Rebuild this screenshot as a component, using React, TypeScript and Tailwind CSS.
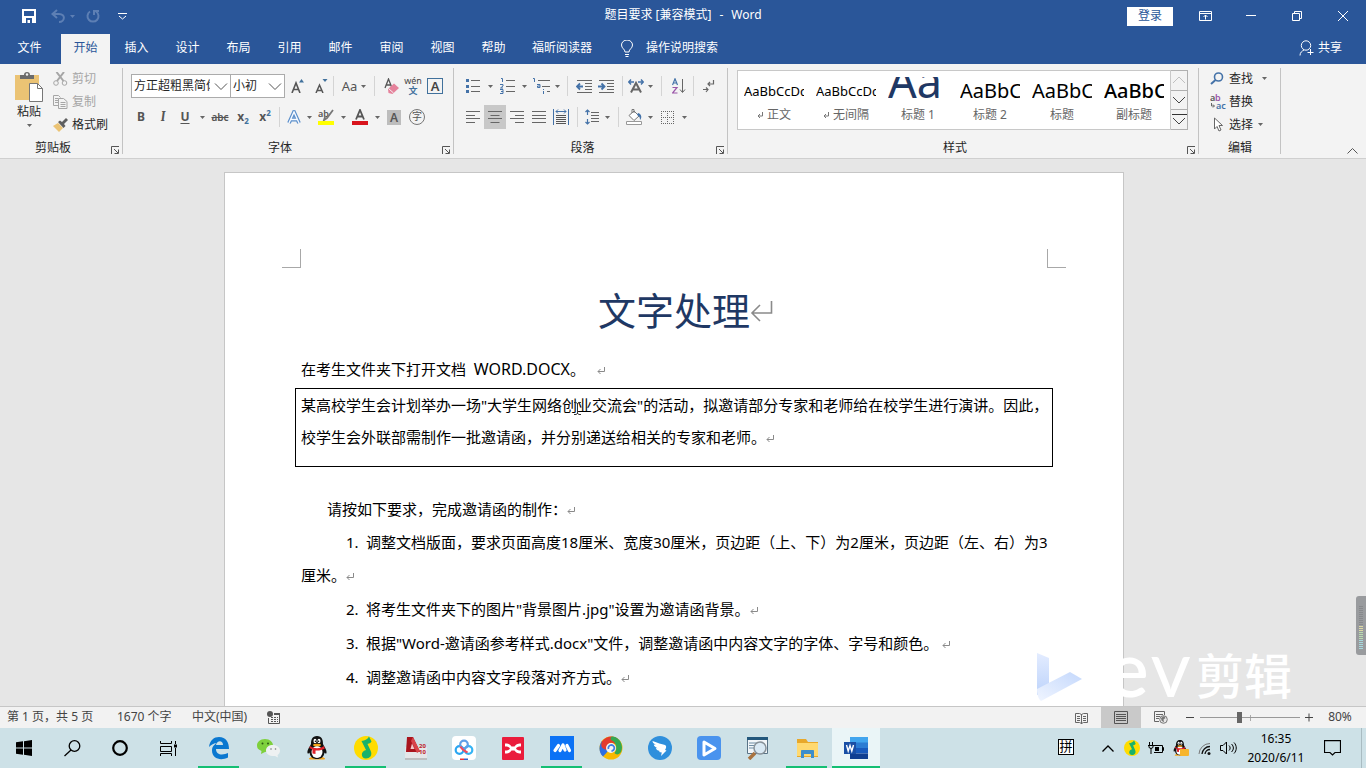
import React from "react";

type Kids = { children: React.ReactNode };

function Icon({ w, h, children }: Kids & { w: number; h: number }) {
  return (
    <svg width={w} height={h} viewBox={`0 0 ${w} ${h}`} fill="none" className="shrink-0" aria-hidden="true">
      {children}
    </svg>
  );
}

const Caret = () => (
  <Icon w={5} h={3}>
    <path d="M0 0h5L2.5 3z" fill="#666" />
  </Icon>
);

const Launcher = () => (
  <Icon w={8} h={8}>
    <path d="M.5 8V.5H8M3 3l4 4M7.500 3.500v4h-4" stroke="#555" />
  </Icon>
);

const Return = () => (
  <svg width="9" height="8" viewBox="0 0 9 8" fill="none" className="inline-block align-baseline" aria-hidden="true">
    <path d="M7.500 0v4.500H1M3.500 2L1 4.500 3.500 7" stroke="#8a8a8a" />
  </svg>
);

function Tool({ label, className, children }: Kids & { label: string; className: string }) {
  return (
    <button type="button" aria-label={label} className={`flex h-6 shrink-0 items-center justify-center ${className}`}>
      {children}
    </button>
  );
}

const Drop = ({ label, width = "w-3" }: { label: string; width?: string }) => (
  <Tool label={`${label} 选项`} className={width}>
    <Caret />
  </Tool>
);

const Sep = () => <span className="mx-[5px] h-5 w-px shrink-0 bg-[#d4d4d4]" />;

function Group({ title, className, launcher = true, children }: Kids & { title: string; className: string; launcher?: boolean }) {
  return (
    <section className={`relative flex shrink-0 flex-col ${className}`}>
      <div className="h-[72px]">{children}</div>
      <div className="flex h-[22px] items-center justify-center pt-[2px]">{title}</div>
      {launcher && (
        <button type="button" aria-label={`${title} 设置`} className="absolute right-[4px] bottom-[4px]">
          <Launcher />
        </button>
      )}
      <span className="absolute top-1 right-0 bottom-1 w-px bg-[#c3c3c3]" />
    </section>
  );
}

const tabs = ["插入", "设计", "布局", "引用", "邮件", "审阅", "视图", "帮助"];

function Header() {
  return (
    <header className="bg-[#2a5699] text-white">
      <div className="grid h-8 grid-cols-[1fr_auto_1fr] items-center">
        <div className="flex items-center pl-[22px]">
          <button type="button" aria-label="保存">
            <Icon w={14} h={14}>
              <path d="M0 0h14v14H0zM2 2v5h10V2zM4 9v5h1.500v-3H8v3h2V9z" fill="#fff" fillRule="evenodd" />
            </Icon>
          </button>
          <button type="button" aria-label="撤消" className="ml-[15px] flex items-center gap-[5px]">
            <Icon w={14} h={14}>
              <path d="M6 1L1.500 5 6 9M2 5h6c7 0 6 8 0 8" stroke="#5d7fb4" strokeWidth="2" />
            </Icon>
            <Icon w={5} h={3}>
              <path d="M0 0h5L2.500 3z" fill="#5d7fb4" />
            </Icon>
          </button>
          <button type="button" aria-label="恢复" className="ml-[11px]">
            <Icon w={14} h={14}>
              <path d="M4 2.500a5.500 5.500 0 1 0 6 0M8 6V2h5" stroke="#5d7fb4" strokeWidth="2" />
            </Icon>
          </button>
          <button type="button" aria-label="自定义快速访问工具栏" className="ml-[18px]">
            <Icon w={9} h={7}>
              <path d="M0 .5h9M1 3l3.500 3L8 3" stroke="#fff" />
            </Icon>
          </button>
        </div>
        <h1 className="flex gap-2 pb-[2px]">
          <span>题目要求 [兼容模式]</span>
          <span>-</span>
          <span>Word</span>
        </h1>
        <div className="flex items-center justify-end">
          <button type="button" className="mr-[9px] h-[19px] w-[46px] bg-white leading-[18px] text-[#2a5699]">
            登录
          </button>
          <button type="button" aria-label="功能区显示选项" className="flex w-[46px] justify-center">
            <Icon w={13} h={10}>
              <path d="M.5.500h12v9H.5zM.5 2.500h12M6.500 8.500V4M4.500 6l2-2 2 2" stroke="#fff" />
            </Icon>
          </button>
          <button type="button" aria-label="最小化" className="flex w-[46px] justify-center">
            <Icon w={10} h={10}>
              <path d="M0 4.500h10" stroke="#fff" />
            </Icon>
          </button>
          <button type="button" aria-label="还原" className="flex w-[46px] justify-center">
            <Icon w={10} h={10}>
              <path d="M.5 2.500h7v7h-7zM2.500 2.500v-2h7v7h-2" stroke="#fff" />
            </Icon>
          </button>
          <button type="button" aria-label="关闭" className="flex w-[46px] justify-center">
            <Icon w={10} h={10}>
              <path d="M0 0l10 10M10 0L0 10" stroke="#fff" />
            </Icon>
          </button>
        </div>
      </div>
      <nav className="flex h-8 items-end gap-[2px]">
        <button type="button" className="h-[30px] w-[59px] pb-[2px]">文件</button>
        <button type="button" className="h-[30px] w-[49px] bg-[#f3f3f3] pb-[2px] text-[#2a5699]">开始</button>
        {tabs.map((t) => (
          <button key={t} type="button" className="h-[30px] w-[49px] pb-[2px]">
            {t}
          </button>
        ))}
        <button type="button" className="h-[30px] w-[84px] pb-[2px]">福昕阅读器</button>
        <button type="button" className="ml-[15px] flex h-[30px] items-center gap-[13px] pb-[2px]">
          <Icon w={12} h={17}>
            <path d="M4 12c0-3-3.500-3.500-3.500-7a5.500 5 0 0 1 11 0c0 3.500-3.500 4-3.500 7zM4 14.500h4M4.500 16.500h3" stroke="#fff" />
          </Icon>
          操作说明搜索
        </button>
        <button type="button" className="mr-6 ml-auto flex h-[30px] items-center gap-1 pb-[2px]">
          <Icon w={15} h={16}>
            <circle cx="7" cy="5.500" r="4.700" stroke="#fff" />
            <path d="M1 15.500c0-3 2-4.500 4-5.500M11.500 9v6M8.500 12.500h6" stroke="#fff" />
          </Icon>
          共享
        </button>
      </nav>
    </header>
  );
}

function Clipboard() {
  return (
    <Group title="剪贴板" className="w-[123px] [&>div:nth-child(2)]:pr-[17px]">
      <div className="flex pt-[3px] pl-[14px]">
        <button type="button" className="flex w-[30px] flex-col items-center pt-[4px]">
          <Icon w={28} h={31}>
            <path d="M0 4h24v25H0z" fill="#ebc374" />
            <path d="M5 8V4h4a3 3 0 0 1 6 0h4v4z" fill="#6b6b6b" />
            <circle cx="12" cy="3.500" r="1.200" fill="#f3f3f3" />
            <path d="M14.500 12.500h8l5 5v13h-13z" fill="#fff" stroke="#777" />
            <path d="M22.500 12.500v5h5" stroke="#777" />
          </Icon>
          <span className="mt-[2px] leading-4">粘贴</span>
          <span className="mt-[4px]">
            <Caret />
          </span>
        </button>
        <div className="ml-[9px] flex flex-col">
          <button type="button" disabled className="flex h-[23px] items-center gap-1 text-[#a6a6a6]">
            <Icon w={15} h={14}>
              <path d="M3.500 0l7 9M11 0L4 9" stroke="#a6a6a6" strokeWidth="2" />
              <circle cx="3" cy="11" r="2.300" stroke="#a6a6a6" />
              <circle cx="11.500" cy="11" r="2.300" stroke="#a6a6a6" />
            </Icon>
            剪切
          </button>
          <button type="button" disabled className="flex h-[23px] items-center gap-1 text-[#a6a6a6]">
            <Icon w={15} h={14}>
              <path d="M5 10.500H.5V.500h5l2 2M2 3.500h3M2 5.500h3M2 7.500h3" stroke="#a6a6a6" />
              <path d="M5.500 3.500h5l3.500 3v7H5.500zM7.500 7.500h5M7.500 9.500h5M7.500 11.500h5" stroke="#a6a6a6" />
            </Icon>
            复制
          </button>
          <button type="button" className="flex h-[23px] items-center gap-1">
            <Icon w={15} h={14}>
              <path d="M0 8l5-3 5 5-4 4z" fill="#ebc374" />
              <path d="M5 4l2-1.500 2 1.500 4-4 2 2-4 4 1.500 2-2 2z" fill="#5f5f5f" />
            </Icon>
            格式刷
          </button>
        </div>
      </div>
    </Group>
  );
}

function Combo({ label, value, className }: { label: string; value: string; className: string }) {
  return (
    <div className={`relative h-6 shrink-0 border border-[#ababab] bg-white ${className}`}>
      <select aria-label={label} className="h-full w-full appearance-none overflow-hidden pr-[20px] pl-[2px]">
        <option>{value}</option>
      </select>
      <span className="pointer-events-none absolute top-[8px] right-[2px]">
        <Icon w={14} h={8}>
          <path d="M1 .5l6 6 6-6" stroke="#555" />
        </Icon>
      </span>
    </div>
  );
}

function FontGroup() {
  return (
    <Group title="字体" className="w-[331px] [&>div:nth-child(2)]:pr-[17px]">
      <div className="flex items-center pt-[10px] pl-[8px]">
        <Combo label="字体名称" value="方正超粗黑简体" className="w-[100px]" />
        <Combo label="字号" value="小初" className="-ml-px w-[55px]" />
        <Tool label="增大字号" className="w-6">
          <Icon w={13} h={14}>
            <path d="M1 14L5 4l4 10M2.500 10.500h5" stroke="#555" strokeWidth="1.600" />
            <path d="M8 3.500h5L10.500 0z" fill="#41719c" />
          </Icon>
        </Tool>
        <Tool label="减小字号" className="w-6">
          <Icon w={13} h={14}>
            <path d="M1 14l3.500-8L8 14M2.500 11.500h4" stroke="#555" strokeWidth="1.500" />
            <path d="M7.500 0h5L10 3z" fill="#41719c" />
          </Icon>
        </Tool>
        <span className="h-5 w-px bg-[#d4d4d4]" />
        <Tool label="更改大小写" className="w-10 gap-1 text-[13px] text-[#555]">
          Aa <Caret />
        </Tool>
        <span className="mr-[5px] h-5 w-px bg-[#d4d4d4]" />
        <Tool label="清除格式" className="w-[22px]">
          <Icon w={15} h={16}>
            <path d="M1 10L4.500 1 8 10M2 7h5" stroke="#555" strokeWidth="1.300" />
            <path d="M4 11l6-5.500 5 4.500-6.500 6-4-1z" fill="#e5829b" />
            <path d="M4.500 10.500l5 4.500" stroke="#f3f3f3" />
          </Icon>
        </Tool>
        <Tool label="拼音指南" className="w-[22px] flex-col text-[9px] leading-[10px] text-[#444]">
          <span>wén</span>
          <span className="font-bold text-[#41719c]">文</span>
        </Tool>
        <Tool label="字符边框" className="w-[22px]">
          <span className="h-4 w-4 border border-[#41719c] text-[13px] leading-[14px] font-semibold text-[#444]">A</span>
        </Tool>
      </div>
      <div className="flex items-center pt-[7px] pl-[7px] text-[#555]">
        <Tool label="加粗" className="w-[22px] text-[12px] font-bold">B</Tool>
        <Tool label="倾斜" className="w-[22px] font-serif text-[13px] font-bold italic">I</Tool>
        <Tool label="下划线" className="w-[22px] text-[12px] font-bold underline underline-offset-2">U</Tool>
        <Drop label="下划线" />
        <Tool label="删除线" className="w-6 text-[10px] font-semibold line-through">abc</Tool>
        <Tool label="下标" className="w-[22px] text-[12px] font-bold">
          x<span className="self-end text-[8px] text-[#41719c]">2</span>
        </Tool>
        <Tool label="上标" className="w-[22px] text-[12px] font-bold">
          x<span className="self-start text-[8px] text-[#41719c]">2</span>
        </Tool>
        <span className="mx-[3px] h-5 w-px bg-[#d4d4d4]" />
        <Tool label="文本效果" className="w-[22px]">
          <Icon w={14} h={15}>
            <path d="M2 13L7 2l5 11M4 9.500h6" stroke="#5b8fcb" strokeWidth="3.800" />
            <path d="M2 13L7 2l5 11M4 9.500h6" stroke="#f7faff" strokeWidth="1.400" />
          </Icon>
        </Tool>
        <Drop label="文本效果" width="w-2" />
        <Tool label="突出显示" className="w-[26px]">
          <Icon w={16} h={16}>
            <text x="0" y="8" fontSize="9" fontWeight="600" fill="#555">ab</text>
            <path d="M15 1L9 9l-3 2 1-3" stroke="#777" strokeWidth="1.800" />
            <path d="M0 12h16v4H0z" fill="#ff0" />
          </Icon>
        </Tool>
        <Drop label="突出显示" width="w-2" />
        <Tool label="字体颜色" className="w-[26px]">
          <Icon w={16} h={16}>
            <path d="M4 10.500L8 1l4 9.500M5.500 7.500h5" stroke="#555" strokeWidth="1.800" />
            <path d="M0 12h16v4H0z" fill="#d8141c" />
          </Icon>
        </Tool>
        <Drop label="字体颜色" width="w-2" />
        <Tool label="字符底纹" className="w-[26px]">
          <span className="h-[15px] w-[14px] bg-[#bdbdbd] text-[12px] leading-[15px] font-semibold">A</span>
        </Tool>
        <Tool label="带圈字符" className="w-5">
          <span className="h-4 w-4 rounded-full border border-[#777] text-[10px] leading-[13px]">字</span>
        </Tool>
      </div>
    </Group>
  );
}

const lineIcon = (d: string) => (
  <Icon w={14} h={12}>
    <path d={d} stroke="#666" />
  </Icon>
);

function ParagraphGroup() {
  return (
    <Group title="段落" className="w-[274px] [&>div:nth-child(2)]:pr-[17px]">
      <div className="flex items-center pt-[10px] pl-[8px]">
        <Tool label="项目符号" className="w-[22px]">
          <Icon w={14} h={14}>
            <path d="M5 1.500h9M5 7.500h9M5 12.500h9" stroke="#666" />
            <path d="M0 0h3v3H0zM0 6h3v3H0zM0 11h3v3H0z" fill="#4472a8" />
          </Icon>
        </Tool>
        <Drop label="项目符号" />
        <Tool label="编号" className="w-[22px]">
          <Icon w={15} h={16}>
            <path d="M6 2.500h9M6 8.500h9M6 13.500h9" stroke="#666" />
            <path d="M1 .5h1.500V4M0 6.500h3v1.500L.5 10H3M0 11.500h3v4H0M1 13.500h2" stroke="#4472a8" />
          </Icon>
        </Tool>
        <Drop label="编号" />
        <Tool label="多级列表" className="w-[22px]">
          <Icon w={17} h={16}>
            <path d="M5 2.500h12M9 8.500h8M14 13.500h3" stroke="#666" />
            <path d="M0 .5h1.500V4M4 6.500h3v3H4.500v-1.500H7M10.500 11v1M10.500 13v3" stroke="#4472a8" />
          </Icon>
        </Tool>
        <Drop label="多级列表" width="w-[10px]" />
        <Sep />
        <Tool label="减少缩进量" className="w-[22px]">
          <Icon w={16} h={13}>
            <path d="M1 .5h15M9 3.500h7M9 6.500h7M9 9.500h7M1 12.500h15" stroke="#666" />
            <path d="M7 6.500H1M4 3.500l-3 3 3 3" stroke="#4472a8" strokeWidth="1.800" />
          </Icon>
        </Tool>
        <Tool label="增加缩进量" className="w-[22px]">
          <Icon w={16} h={13}>
            <path d="M1 .5h15M9 3.500h7M9 6.500h7M9 9.500h7M1 12.500h15" stroke="#666" />
            <path d="M0 6.500h6M3.500 3.500l3 3-3 3" stroke="#4472a8" strokeWidth="1.800" />
          </Icon>
        </Tool>
        <Sep />
        <Tool label="中文版式" className="w-4">
          <Icon w={16} h={14}>
            <path d="M3 13.500L8 4l5 9.500M5 10.500h6" stroke="#666" strokeWidth="2" />
            <path d="M6 3H1M3 .5L.8 3 3 5.500M10 3h5M13 .5L15.200 3 13 5.500" stroke="#4472a8" strokeWidth="1.400" />
          </Icon>
        </Tool>
        <Drop label="中文版式" />
        <Sep />
        <Tool label="排序" className="w-6">
          <Icon w={14} h={16}>
            <path d="M.5 7L3 .8 5.500 7M1.500 5h3" stroke="#4472a8" strokeWidth="1.200" />
            <path d="M.5 9.500h4.500l-4.500 5.500h5" stroke="#9a55a8" strokeWidth="1.200" />
            <path d="M10.500 1v13M8 11.500l2.500 3 2.500-3" stroke="#666" />
          </Icon>
        </Tool>
        <span className="mx-[2px] h-5 w-px bg-[#d4d4d4]" />
        <Tool label="显示编辑标记" className="w-[26px]">
          <Icon w={12} h={13}>
            <path d="M10.500 0v4H5M7 2L5 4l2 2M0 9.500h5M3 7.500l2 2-2 2.500" stroke="#666" strokeWidth="1.200" />
          </Icon>
        </Tool>
      </div>
      <div className="flex items-center pt-[7px] pl-[8px]">
        <Tool label="左对齐" className="w-[22px]">{lineIcon("M0 .5h14M0 4.500h9M0 7.500h14M0 11.500h9")}</Tool>
        <Tool label="居中" className="w-[22px] bg-[#c8c8c8]">{lineIcon("M0 .5h14M2.500 4.500h9M0 7.500h14M2.500 11.500h9")}</Tool>
        <Tool label="右对齐" className="w-[22px]">{lineIcon("M0 .5h14M5 4.500h9M0 7.500h14M5 11.500h9")}</Tool>
        <Tool label="两端对齐" className="w-[22px]">{lineIcon("M0 .5h14M0 4.500h14M0 7.500h14M0 11.500h14")}</Tool>
        <Tool label="分散对齐" className="w-[22px]">
          <Icon w={16} h={16}>
            <path d="M.5 0v16M15.500 0v16M3 2.500h10M5 .5l-2 2 2 2M11 .5l2 2-2 2" stroke="#4472a8" />
            <path d="M3 6.500h10M3 8.500h10M3 10.500h10M3 12.500h10M3 14.500h10" stroke="#555" />
          </Icon>
        </Tool>
        <Sep />
        <Tool label="行距" className="w-[18px]">
          <Icon w={14} h={16}>
            <path d="M2.500 1v5M.5 3l2-2 2 2M2.500 15v-5M.5 13l2 2 2-2" stroke="#4472a8" strokeWidth="1.200" />
            <path d="M6 3.500h8M6 6.500h8M6 9.500h8M6 12.500h8" stroke="#666" />
          </Icon>
        </Tool>
        <Drop label="行距" />
        <Sep />
        <Tool label="底纹" className="w-5">
          <Icon w={16} h={16}>
            <path d="M3 6.500L8 2l5 5-5 4.500zM6 4V.5h2V4" fill="#fff" stroke="#777" />
            <path d="M12 4c4 1 4 5 2 7 0-3-1-4-3-5z" fill="#4472a8" />
            <path d="M.5 12.500h15v3H.5z" fill="#fff" stroke="#999" />
          </Icon>
        </Tool>
        <Drop label="底纹" />
        <Tool label="边框" className="w-[22px]">
          <Icon w={13} h={13}>
            <path d="M.5 0v13M6.500 0v13M12.500 0v13M0 .5h13M0 6.500h13M0 12.500h13" stroke="#666" strokeDasharray="1 1" />
          </Icon>
        </Tool>
        <Drop label="边框" />
      </div>
    </Group>
  );
}

const styles = [
  { name: "正文", sample: "AaBbCcDd", mark: true, cls: "text-[13px] text-black" },
  { name: "无间隔", sample: "AaBbCcDd", mark: true, cls: "text-[13px] text-black" },
  { name: "标题 1", sample: "Aa", mark: false, cls: "pb-[20px] text-[45px] text-[#1f3864]" },
  { name: "标题 2", sample: "AaBbCc", mark: false, cls: "text-[20px] text-black" },
  { name: "标题", sample: "AaBbCc", mark: false, cls: "text-[20px] text-black" },
  { name: "副标题", sample: "AaBbCc", mark: false, cls: "text-[20px] font-medium text-black" },
];

function StylesGroup() {
  return (
    <Group title="样式" className="w-[471px] [&>div:nth-child(2)]:pr-[17px]">
      <div className="flex pt-[6px] pl-[9px]">
        <div className="flex h-[60px] border border-[#c8c8c8] bg-white">
          {styles.map((s) => (
            <button key={s.name} type="button" className="flex w-[72px] flex-col items-center pt-[6px]">
              <span className={`flex h-7 w-[60px] items-center overflow-hidden whitespace-nowrap ${s.cls}`}>
                {s.sample}
              </span>
              <span className="flex items-center gap-1 leading-5 text-[#666]">
                {s.mark && (
                  <Icon w={6} h={6}>
                    <path d="M5.500 0v4H1M3 2L1 4l2 2" stroke="#777" />
                  </Icon>
                )}
                {s.name}
              </span>
            </button>
          ))}
        </div>
        <div className="flex h-[60px] w-[17px] flex-col border-y border-r border-[#b0b0b0]">
          {["M1 7l6-6 6 6", "M1 1l6 6 6-6", "M1 1l6 6 6-6"].map((d, i) => (
            <button
              key={i}
              type="button"
              aria-label={["上一行", "下一行", "其他样式"][i]}
              className="flex flex-1 flex-col items-center justify-center gap-[2px] border-b border-[#b0b0b0] last:border-b-0"
            >
              {i === 2 && <span className="h-px w-[15px] bg-[#333]" />}
              <Icon w={14} h={8}>
                <path d={d} stroke={i === 0 ? "#c0c0c0" : "#444"} />
              </Icon>
            </button>
          ))}
        </div>
      </div>
    </Group>
  );
}

function EditGroup() {
  return (
    <Group title="编辑" launcher={false} className="w-[82px]">
      <div className="flex flex-col pt-[3px] pl-[11px]">
        <button type="button" className="flex h-[23px] items-center gap-[5px]">
          <Icon w={14} h={13}>
            <circle cx="8.500" cy="5" r="4" stroke="#4472a8" strokeWidth="1.600" />
            <path d="M5.500 8L1 12" stroke="#4472a8" strokeWidth="2" />
          </Icon>
          查找
          <span className="ml-1">
            <Caret />
          </span>
        </button>
        <button type="button" className="flex h-[23px] items-center gap-[3px]">
          <Icon w={16} h={18}>
            <text x="0" y="8" fontSize="9" fontWeight="600" fill="#555">a</text>
            <text x="5" y="8" fontSize="9" fontWeight="600" fill="#9a55a8">b</text>
            <text x="6" y="16" fontSize="9" fontWeight="600" fill="#4472a8">ac</text>
            <path d="M1.500 10v3H4M3 11.500L4.500 13 3 14.500" stroke="#666" />
          </Icon>
          替换
        </button>
        <button type="button" className="flex h-[23px] items-center gap-[5px]">
          <Icon w={14} h={15}>
            <path d="M4.500 1v11l2.500-2.500 2 4.500 2-1-2-4.500h3.500z" fill="#fff" stroke="#666" />
          </Icon>
          选择
          <Caret />
        </button>
      </div>
    </Group>
  );
}

function DocumentPage() {
  return (
    <main className="relative flex min-h-0 flex-1 justify-center overflow-hidden bg-[#e6e6e6] pt-[13px] pr-[18px]">
      <article className="relative h-[1300px] w-[900px] border border-[#c6c6c6] bg-white px-[76px] pt-[76px] text-[15px] whitespace-nowrap text-black">
        <div className="-mx-[19px] flex justify-between">
          <span className="h-[19px] w-[19px] border-r border-b border-[#a8a8a8]" />
          <span className="h-[19px] w-[19px] border-b border-l border-[#a8a8a8]" />
        </div>
        <h2 className="relative mx-auto mt-[14px] w-[152px] text-[38px] leading-[56px] text-[#1f3864]">
          文字处理
          <span className="absolute top-[19px] left-full">
            <Icon w={23} h={23}>
              <path d="M21.500 0v12H2M10 4l-8 8 8 8" stroke="#8a8a8a" strokeWidth="1.600" />
            </Icon>
          </span>
        </h2>
        <p className="mt-[15px] leading-[33px]">
          在考生文件夹下打开文档&nbsp;&nbsp;<span className="text-[16px]">WORD.DOCX</span>。&nbsp;&nbsp; <Return />
        </p>
        <p className="-mx-[6px] mt-[2px] h-[79px] border border-black pl-[5px] leading-[32px]">
          某高校学生会计划举办一场"大学生网络创业交流会"的活动，拟邀请部分专家和老师给在校学生进行演讲。因此，
          <br />
          校学生会外联部需制作一批邀请函，并分别递送给相关的专家和老师。
          <Return />
        </p>
        <p className="mt-[26px] pl-[26px] leading-[33px]">
          请按如下要求，完成邀请函的制作：
          <Return />
        </p>
        <ol className="flex flex-col gap-px leading-[33px]">
          <li>
            <span className="inline-block w-[65px] pl-[45px]">1.</span>
            调整文档版面，要求页面高度18厘米、宽度30厘米，页边距（上、下）为2厘米，页边距（左、右）为3
            <br />
            厘米。
            <Return />
          </li>
          <li>
            <span className="inline-block w-[65px] pl-[45px]">2.</span>
            将考生文件夹下的图片"背景图片.jpg"设置为邀请函背景。
            <Return />
          </li>
          <li>
            <span className="inline-block w-[65px] pl-[45px]">3.</span>
            根据"Word-邀请函参考样式.docx"文件，调整邀请函中内容文字的字体、字号和颜色。 <Return />
          </li>
          <li>
            <span className="inline-block w-[65px] pl-[45px]">4.</span>
            调整邀请函中内容文字段落对齐方式。
            <Return />
          </li>
        </ol>
        {/* text cursor */}
        <span className="absolute top-[229px] left-[349px]">
          <Icon w={7} h={13}>
            <path d="M0 .5h2l1.500 1 1.500-1h2M3.500 1v11M0 12.500h2l1.500-1 1.500 1h2" stroke="#333" />
          </Icon>
        </span>
      </article>

      <div className="absolute right-[74px] bottom-0 flex h-[60px] items-center text-white" aria-hidden="true">
        <svg width="50" height="50" viewBox="0 0 50 50" className="mr-[23px]">
          <defs>
            <linearGradient id="stem" x1="0" y1="0" x2="0" y2="1">
              <stop offset="0" stopColor="#e3ecff" />
              <stop offset="1" stopColor="#bdd3fb" />
            </linearGradient>
            <linearGradient id="arm" x1="0" y1="1" x2="1" y2="0">
              <stop offset="0" stopColor="#f0f5ff" />
              <stop offset="1" stopColor="#c4d8fc" />
            </linearGradient>
          </defs>
          <path d="M2 2l12 5v31L2 44z" fill="url(#stem)" />
          <path d="M2 38l33-17 12 7L6 50c-3-2-4-8-4-12z" fill="url(#arm)" />
        </svg>
        <div className="mr-[6px] flex items-baseline gap-[3px] font-[Lato] font-semibold">
          <span className="text-[76px] leading-[44px]">e</span>
          <span className="text-[56px] leading-[60px]">V</span>
        </div>
        <span className="text-[48px] leading-[60px] font-medium">剪辑</span>
      </div>

      <div className="absolute right-0 bottom-[51px] flex h-[59px] w-[10px] flex-col justify-end gap-px rounded-l-[3px] bg-[#999b9e] px-[3px] pb-[6px]">
        {Array.from({ length: 22 }, (_, i) => (
          <span key={i} className={`h-px w-1 ${i < 10 ? "bg-[#87898c]" : i < 13 ? "bg-[#dcd9a4]" : i < 17 ? "bg-[#b9dcb0]" : "bg-[#a6d8dc]"}`} />
        ))}
      </div>
    </main>
  );
}

function StatusBar() {
  return (
    <div className="flex h-[22px] shrink-0 items-center border-t border-[#c6c6c6] bg-[#f2f2f2] pl-[7px] text-[#444]">
      <span className="w-[110px] pb-px">第 1 页，共 5 页</span>
      <span className="w-[75px] pb-px">1670 个字</span>
      <span className="w-[75px] pb-px">中文(中国)</span>
      <button type="button" aria-label="宏录制">
        <Icon w={13} h={13}>
          <circle cx="3" cy="3" r="3" fill="#555" />
          <path d="M7 2.500h5.500v10h-11V7" stroke="#555" />
          <path d="M7 2h6v2H7z" fill="#555" />
          <path d="M4 6.500h7M4 8.500h7M4 10.500h7" stroke="#555" strokeDasharray="2 1" />
        </Icon>
      </button>
      <div className="ml-auto flex h-full items-center">
        <button type="button" aria-label="阅读视图" className="flex h-full w-10 items-center justify-center">
          <Icon w={13} h={12}>
            <path d="M6.500 2v10M.5 1.500h4l2 1 2-1h4v9h-4l-2 1-2-1h-4zM2 4.500h3M2 6.500h3M2 8.500h3M8 4.500h3M8 6.500h3M8 8.500h3" stroke="#666" />
          </Icon>
        </button>
        <button type="button" aria-label="页面视图" className="flex h-full w-10 items-center justify-center bg-[#c9c9c9]">
          <Icon w={14} h={13}>
            <path d="M.5.500h13v12H.5zM2 3.500h10M2 5.500h10M2 7.500h10M2 9.500h10" stroke="#555" />
          </Icon>
        </button>
        <button type="button" aria-label="Web 版式视图" className="flex h-full w-10 items-center justify-center">
          <Icon w={14} h={13}>
            <path d="M5 10.500H.5V.500h10V4M2 3.500h7M2 5.500h4M2 7.500h3" stroke="#666" />
            <circle cx="9.500" cy="8.500" r="3.800" fill="#e8e8e8" stroke="#777" />
            <path d="M7 7l3-2 1.500 2-2 1.500.5 3-2.500-2z" fill="#777" />
          </Icon>
        </button>
        <button type="button" aria-label="缩小" className="ml-[5px] flex w-[9px]">
          <Icon w={9} h={9}>
            <path d="M0 4.500h8" stroke="#444" />
          </Icon>
        </button>
        <div className="relative mx-[5px] flex items-center">
          <span className="absolute left-[50px] h-[6px] w-px bg-[#aaa]" />
          <input
            type="range"
            aria-label="显示比例"
            min={0}
            max={100}
            defaultValue={39}
            className="relative h-3 w-[100px] appearance-none bg-transparent [&::-webkit-slider-runnable-track]:h-px [&::-webkit-slider-runnable-track]:bg-[#999] [&::-webkit-slider-thumb]:-mt-[5px] [&::-webkit-slider-thumb]:h-[11px] [&::-webkit-slider-thumb]:w-[5px] [&::-webkit-slider-thumb]:appearance-none [&::-webkit-slider-thumb]:bg-[#666]"
          />
        </div>
        <button type="button" aria-label="放大" className="flex w-[9px]">
          <Icon w={9} h={9}>
            <path d="M0 4.500h8M4 .5v8" stroke="#444" />
          </Icon>
        </button>
        <button type="button" className="w-[52px] pb-px">80%</button>
      </div>
    </div>
  );
}

const QQ = ({ size }: { size: number }) => (
  <svg width={size} height={size} viewBox="0 0 24 24" aria-hidden="true">
    <path d="M7 21c-3 1-4 2-2 2.500h14c2-.5 1-1.500-2-2.500z" fill="#f6a51c" />
    <path d="M12 0c5 0 6 4 6 8 2 4 4 6 3.500 9-.5 1.500-2-.5-2-.5C19 21 16 23 12 23s-7-2-7.500-6.500c0 0-1.500 2-2 .5C2 14 4 12 6 8c0-4 1-8 6-8z" fill="#111" />
    <ellipse cx="12" cy="16" rx="5.500" ry="6" fill="#fff" />
    <ellipse cx="10" cy="5" rx="1.500" ry="2.200" fill="#fff" />
    <ellipse cx="14" cy="5" rx="1.500" ry="2.200" fill="#fff" />
    <circle cx="10.400" cy="5.300" r=".7" />
    <circle cx="13.600" cy="5.300" r=".7" />
    <ellipse cx="12" cy="9" rx="4" ry="1.300" fill="#f6a51c" />
    <path d="M5 10c4 3 10 3 14 0l.8 2.500c-3 1.800-6 2.300-9.300 2V18L7.500 17.500v-4L4.300 12z" fill="#e0222b" />
  </svg>
);

const QQMusic = ({ size }: { size: number }) => (
  <svg width={size} height={size} viewBox="0 0 24 24" aria-hidden="true">
    <circle cx="12" cy="12" r="12" fill="#ffdc00" />
    <path d="M7.500 5C11 4.500 14 3 15 .5l2.500 5c-1 1.500-2 2-4 2.500l3 6.500c2.500 5-1 8-4.500 8-5 0-6-7 0-8.500z" fill="#19b26b" />
  </svg>
);

const apps = [
  {
    name: "Edge",
    open: true,
    icon: <path d="M2 11C3 4 7 1 12 1c7 0 10 5 10 12H9c0 7 8 6 12 4v4.500c-7 3.500-16 1.500-16-7C5 10 8 8 10 7c-3 0-6 2-8 4zm7-2h7c0-5-6-5-7 0z" fill="#0b78d0" />,
  },
  {
    name: "微信",
    open: false,
    icon: (
      <>
        <path d="M9 3c5 0 8 3 8 6.500S14 16 9 16l-4 2 .5-3C2 13.500 1 12 1 9.500 1 6 4 3 9 3z" fill="#7ed03c" />
        <path d="M17 9c4 0 7 2.500 7 5.500 0 2-1 3.500-2.500 4.500l.5 2.500-3-1.500c-5 .5-9-2-9-5.500S13 9 17 9z" fill="#eef1f2" />
        <circle cx="6.500" cy="7.500" r="1" fill="#2c5a12" />
        <circle cx="12" cy="7.500" r="1" fill="#2c5a12" />
        <circle cx="15" cy="13" r=".8" fill="#777" />
        <circle cx="19.500" cy="13" r=".8" fill="#777" />
      </>
    ),
  },
  { name: "QQ", open: false, icon: <QQ size={24} /> },
  { name: "QQ音乐", open: true, icon: <QQMusic size={24} /> },
  {
    name: "AutoCAD 2010",
    open: false,
    icon: (
      <>
        <path d="M2 11h22v13H2z" fill="#e4e6e8" />
        <path d="M2 22h22v2H2z" fill="#bcbec0" />
        <path d="M4 1h6l7 15H3z" fill="#a8141d" />
        <path d="M10 1l7 14-3 2L8 5z" fill="#d8434a" />
        <path d="M7.500 13L9 7.500l2.500 5.500z" fill="#f3c9cb" />
        <text x="16" y="12" fontSize="6" fontWeight="700" fill="#c02028">20</text>
        <text x="16" y="18" fontSize="6" fontWeight="700" fill="#c02028">10</text>
      </>
    ),
  },
  {
    name: "百度网盘",
    open: false,
    icon: (
      <>
        <rect width="24" height="24" rx="4" fill="#fff" />
        <circle cx="7.500" cy="14" r="3.800" fill="none" stroke="#29a6f2" strokeWidth="2.200" />
        <circle cx="16.500" cy="14" r="3.800" fill="none" stroke="#34b4f5" strokeWidth="2.200" />
        <circle cx="12" cy="8.500" r="3.800" fill="none" stroke="#5f9fe8" strokeWidth="2.200" />
        <path d="M8.500 10.500c1 2 5 5 7 6" fill="none" stroke="#f24a5c" strokeWidth="2" />
        <path d="M8 22.500h4V24H8z" fill="#e33" />
        <path d="M12 22.500h4V24h-4z" fill="#36c" />
      </>
    ),
  },
  {
    name: "XMind",
    open: false,
    icon: (
      <>
        <rect x="1" y="1" width="22" height="23" rx="1" fill="#ea1c3c" />
        <path d="M4 7.500c4 0 5 1 6.500 3h3C15 8.500 16 7.500 20 7.500v3c-3 0-4 .5-5 2 1 1.500 2 2 5 2v3c-4 0-5-1-6.500-3h-3C9 16.500 8 17.500 4 17.500v-3c3 0 4-.5 5-2-1-1.500-2-2-5-2z" fill="#fff" />
      </>
    ),
  },
  {
    name: "墨刀",
    open: true,
    icon: (
      <>
        <rect width="24" height="24" fill="#0b72f5" />
        <path d="M5 14.500l3.500-5M10 14.500l3-5.500 2 5M17 9.500l2.500 5" stroke="#fff" strokeWidth="3.200" fill="none" strokeLinecap="round" strokeLinejoin="round" />
      </>
    ),
  },
  {
    name: "浏览器",
    open: false,
    icon: (
      <>
        <circle cx="12" cy="12" r="11.500" fill="#f8b900" />
        <path d="M12 12L4 20.500C-1 16 0 9 3 5z" fill="#2f6fe0" />
        <path d="M3 5.500C7-.5 15-1 19 3l-3 5c-5-3-9 0-8 6-5-1-7-4-5-8.500z" fill="#e33b2e" />
        <path d="M12 4c-1-2 0-3 1-3.500 8 .5 12 9 9 15.500-2 3-5 3-6.500 1C19 12 17 6 12 4z" fill="#33a852" />
        <circle cx="12" cy="12" r="5" fill="#f5f5f5" />
        <path d="M9.500 13a3 3 0 1 1 3 2" fill="none" stroke="#3f7fe6" strokeWidth="1.800" />
      </>
    ),
  },
  {
    name: "钉钉",
    open: false,
    icon: (
      <>
        <circle cx="12" cy="12" r="12" fill="#2f8fdc" />
        <path d="M4.500 5c5 2 9 3 12.500 4 2 1 1 3.500 0 5l1.500.5L13 20l.8-3.500-2.800-.5.800-1c-2.500-.5-3.500-1.500-4-3l2 .2c-2.500-1-3.800-2-4-3.700l2 .3C5.500 7.500 4.500 6.500 4.500 5z" fill="#fff" />
      </>
    ),
  },
  {
    name: "播放器",
    open: false,
    icon: (
      <>
        <rect width="24" height="24" rx="4" fill="#4a93ee" />
        <path d="M7 6l11 6.500L7 19z" fill="none" stroke="#fff" strokeWidth="3" strokeLinejoin="round" />
      </>
    ),
  },
  {
    name: "搜索工具",
    open: false,
    icon: (
      <>
        <path d="M1.500 1.500h20v16h-20z" fill="#f2f6f9" stroke="#5a7487" />
        <path d="M1 1h21v3H1z" fill="#23577c" />
        <path d="M3 7h8M3 9.500h5M3 12h5" stroke="#6f8ea5" />
        <path d="M9 17l-6 6" stroke="#a9723f" strokeWidth="3.500" />
        <circle cx="14" cy="12" r="6" fill="#d9e9f4" stroke="#889299" strokeWidth="1.500" />
      </>
    ),
  },
  {
    name: "文件资源管理器",
    open: true,
    icon: (
      <>
        <path d="M2 3h9l2 3h10v15H2z" fill="#e8a82a" />
        <path d="M2 7h21v13H2z" fill="#ffd970" />
        <path d="M6 22v-7c0-1 .5-1 1-1h11c.5 0 1 0 1 1v7h-3v-4H9v4z" fill="#3d8ecb" />
      </>
    ),
  },
];

function Taskbar() {
  return (
    <footer className="flex h-10 shrink-0 bg-[#cde1e7] text-black">
      <button type="button" aria-label="开始" className="flex w-12 items-center justify-center">
        <Icon w={16} h={16}>
          <path d="M0 2.300L7 1.300V7.500H0zM8 1.200L16 0v7.500H8zM0 8.500h7v6.200L0 13.700zM8 8.500h8V16l-8-1.200z" fill="#000" />
        </Icon>
      </button>
      <button type="button" aria-label="搜索" className="flex w-12 items-center justify-center">
        <Icon w={17} h={17}>
          <circle cx="10.500" cy="6" r="5.300" stroke="#000" strokeWidth="1.300" />
          <path d="M7 10L.5 16" stroke="#000" strokeWidth="1.300" />
        </Icon>
      </button>
      <button type="button" aria-label="Cortana" className="flex w-12 items-center justify-center">
        <Icon w={16} h={16}>
          <circle cx="8" cy="8" r="6.800" stroke="#000" strokeWidth="2.200" />
        </Icon>
      </button>
      <button type="button" aria-label="任务视图" className="mr-[2px] flex w-12 items-center justify-center">
        <Icon w={17} h={15}>
          <path d="M.5 0v2.500h11V0M.5 5.500h11v5H.5zM.5 15v-2.500h11V15M15.500 0v3M15.500 7v8" stroke="#000" />
          <path d="M14 3.500h3v3h-3z" fill="#000" />
        </Icon>
      </button>
      {apps.map((a) => (
        <button key={a.name} type="button" aria-label={a.name} className="relative flex w-[49px] items-center justify-center">
          <svg width="24" height="24" viewBox="0 0 24 24" aria-hidden="true">
            {a.icon}
          </svg>
          {a.open && <span className="absolute inset-x-1 bottom-0 h-[2px] bg-[#14bf73]" />}
        </button>
      ))}
      <button type="button" aria-label="Word" className="relative ml-px flex w-12 items-center justify-center bg-[#eaf5f7]">
        <svg width="24" height="22" viewBox="0 0 24 22" aria-hidden="true">
          <path d="M6 0h18v6H6z" fill="#41a5ee" />
          <path d="M6 5.500h18V11H6z" fill="#2b7cd3" />
          <path d="M6 11h18v5.500H6z" fill="#185abd" />
          <path d="M6 16.500h18V22H6z" fill="#103f91" />
          <path d="M0 5h12v12H0z" fill="#1a4fa5" />
          <path d="M2.500 8l1.700 6L6 8.500 7.800 14l1.700-6" fill="none" stroke="#fff" strokeWidth="1.400" />
        </svg>
        <span className="absolute inset-x-0 bottom-0 h-[2px] bg-[#14bf73]" />
      </button>

      <div className="ml-auto flex items-center">
        <button type="button" aria-label="输入法" className="mr-[22px] mb-[3px] h-4 w-4 border border-black bg-white text-[13px] leading-[13px]">拼</button>
        <button type="button" aria-label="显示隐藏的图标" className="flex w-6 justify-center">
          <Icon w={12} h={7}>
            <path d="M.5 6.500L6 1l5.500 5.500" stroke="#000" strokeWidth="1.300" />
          </Icon>
        </button>
        <button type="button" aria-label="QQ音乐" className="flex w-6 justify-center">
          <QQMusic size={16} />
        </button>
        <button type="button" aria-label="电源" className="flex w-6 justify-center">
          <Icon w={16} h={13}>
            <path d="M5 3.500h9.500v7H6M14.500 5.500h1v3h-1M1.500 0v3M4.500 0v3M0 3.500h6M1 3.500v2l2 1 2-1v-2M3 6v6" stroke="#000" />
            <path d="M7 5h4v4H7z" fill="#000" />
          </Icon>
        </button>
        <button type="button" aria-label="QQ" className="relative flex w-6 justify-center">
          <QQ size={16} />
          <span className="absolute right-[3px] bottom-0 h-[7px] w-[9px] rounded-[1px] bg-[#f7b52c]" />
        </button>
        <button type="button" aria-label="网络" className="flex w-[25px] justify-center">
          <Icon w={13} h={13}>
            <path d="M1 12A11 11 0 0 1 12 1.500" stroke="#777" />
            <path d="M4 12a8 8 0 0 1 8-7.500M7 12a5 5 0 0 1 5-4.500" stroke="#111" strokeWidth="1.300" />
            <circle cx="11" cy="11.500" r="1.500" fill="#111" />
          </Icon>
        </button>
        <button type="button" aria-label="音量" className="flex w-[22px] justify-center">
          <Icon w={17} h={14}>
            <path d="M.5 4.500h2.500L6.500 1v12L3 9.500H.5zM9 4.500c1.500 1.500 1.500 3.500 0 5M11.500 3c2.500 2.500 2.500 5.500 0 8M14 1.500c3 3 3 8 0 11" stroke="#000" />
          </Icon>
        </button>
        <button type="button" className="flex w-[74px] flex-col items-center leading-[19px]">
          <span>16:35</span>
          <span>2020/6/11</span>
        </button>
        <button type="button" aria-label="通知" className="ml-[3px] flex h-full w-[46px] items-center justify-center border-r border-[#a9bcc2] pr-[12px]">
          <Icon w={17} h={16}>
            <path d="M.5.700h16v11.800H11L8.500 15 6 12.500H.5z" stroke="#000" strokeWidth="1.200" />
          </Icon>
        </button>
        <span className="w-1" />
      </div>
    </footer>
  );
}

export default function App() {
  return (
    <div className="flex h-screen flex-col overflow-hidden font-['Noto_Sans','Noto_Sans_CJK_SC',sans-serif] text-[12px] leading-4">
      <Header />
      <div className="flex h-[95px] shrink-0 border-b border-[#cfcfcf] bg-[#f3f3f3] text-[#262626]">
        <Clipboard />
        <FontGroup />
        <ParagraphGroup />
        <StylesGroup />
        <EditGroup />
        <button type="button" aria-label="折叠功能区" className="mr-2 mb-1 ml-auto self-end">
          <Icon w={11} h={6}>
            <path d="M.5 5.500l5-5 5 5" stroke="#555" />
          </Icon>
        </button>
      </div>
      <DocumentPage />
      <StatusBar />
      <Taskbar />
    </div>
  );
}
